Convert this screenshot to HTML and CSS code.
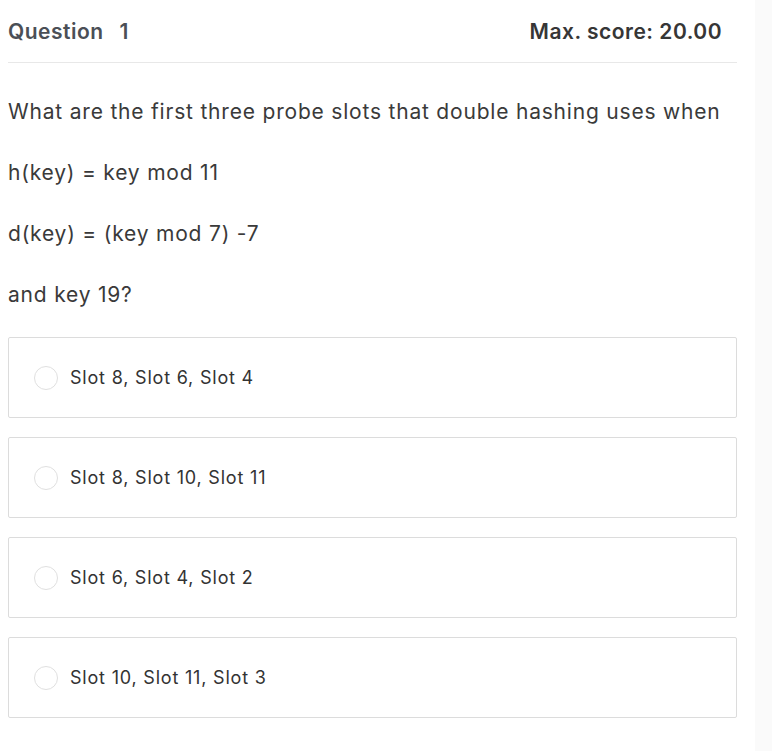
FILE: index.html
```html
<!DOCTYPE html>
<html>
<head>
<meta charset="utf-8">
<link rel="stylesheet" href="styles.css">
</head>
<body>
<div class="page">
  <div class="header">
    <div class="qtitle">Question <span class="qnum">1</span></div>
    <div class="score">Max. score: 20.00</div>
  </div>
  <div class="question">
    <p>What are the first three probe slots that double hashing uses when</p>
    <p>h(key) = key mod 11</p>
    <p>d(key) = (key mod 7) -7</p>
    <p>and key 19?</p>
  </div>
  <div class="options">
    <label class="option"><span class="radio"></span><span class="otext">Slot 8, Slot 6, Slot 4</span></label>
    <label class="option"><span class="radio"></span><span class="otext">Slot 8, Slot 10, Slot 11</span></label>
    <label class="option"><span class="radio"></span><span class="otext">Slot 6, Slot 4, Slot 2</span></label>
    <label class="option"><span class="radio"></span><span class="otext">Slot 10, Slot 11, Slot 3</span></label>
  </div>
</div>
</body>
</html>
```
FILE: styles.css
```css
html, body {
  margin: 0;
  padding: 0;
}
body {
  background: #fafafa;
  font-family: Inter, "Open Sans", sans-serif;
  color: #333;
}
.page {
  width: 747px;
  background: #ffffff;
  padding: 0 0 34px 8px;
}
.header {
  display: flex;
  justify-content: space-between;
  align-items: center;
  width: 729px;
  height: 63px;
  border-bottom: 1px solid #e8e8e8;
  box-sizing: border-box;
  padding-right: 15px;
}
.qtitle, .score {
  font-size: 21px;
  font-weight: 600;
  letter-spacing: 0.5px;
  color: #4b4f56;
  margin-top: 1px;
}
.score { color: #363636; }
.qnum { margin-left: 10px; }
.question {
  padding-top: 34px;
}
.question p {
  margin: 0 0 31px 0;
  font-size: 21px;
  letter-spacing: 0.8px;
  line-height: 30px;
  color: #3a3a3a;
}
.question p:last-child { margin-bottom: 27px; }
.options {
  width: 729px;
  display: flex;
  flex-direction: column;
  gap: 19px;
}
.option {
  display: flex;
  align-items: center;
  height: 81px;
  box-sizing: border-box;
  border: 1px solid #dcdcdc;
  border-radius: 2px;
  padding-left: 25px;
}
.radio {
  width: 24px;
  height: 24px;
  border: 1px solid #e0e0e0;
  border-radius: 50%;
  box-sizing: border-box;
  margin-right: 12px;
}
.otext {
  font-size: 18px;
  letter-spacing: 0.8px;
  color: #333;
}
```
